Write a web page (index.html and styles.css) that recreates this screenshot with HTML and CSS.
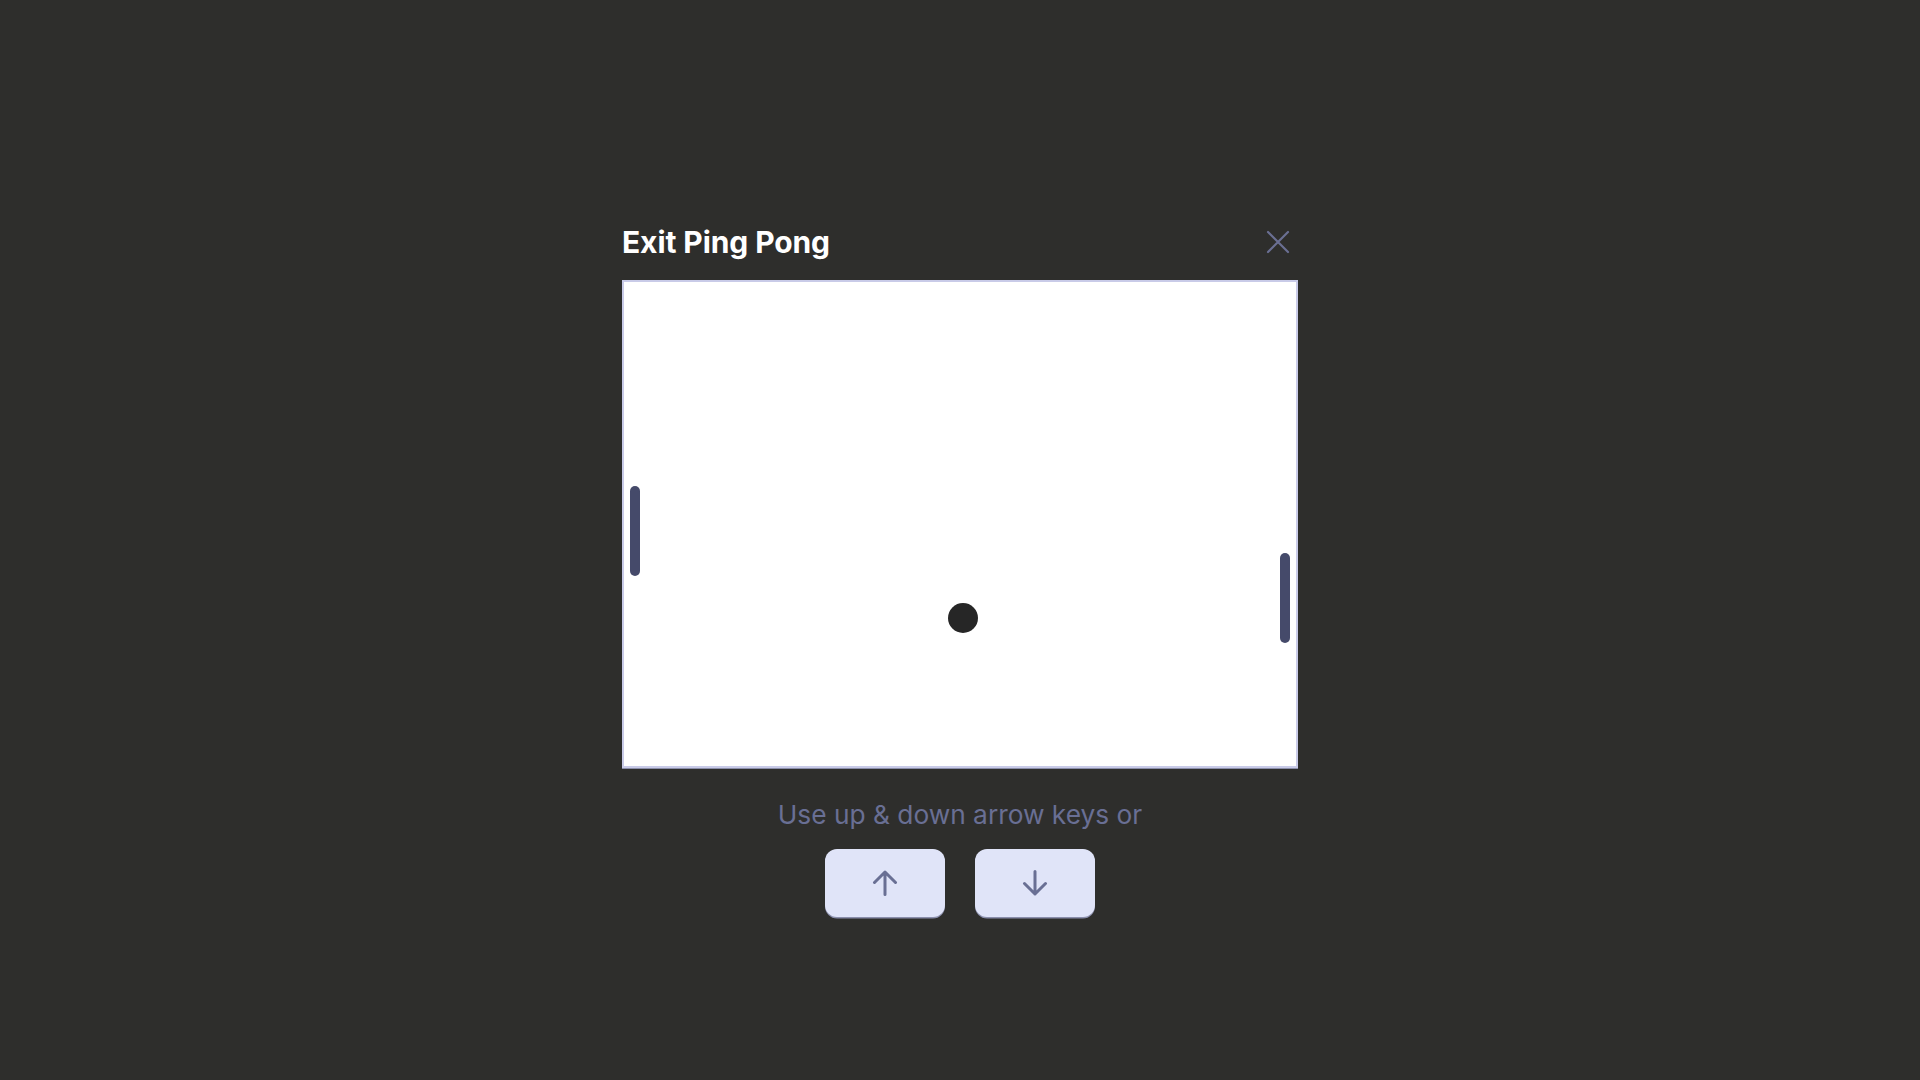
FILE: index.html
```html
<!DOCTYPE html>
<html lang="en">
<head>
<meta charset="utf-8">
<title>Exit Ping Pong</title>
<link rel="stylesheet" href="styles.css">
</head>
<body>
<div class="page">
  <div class="dialog">
    <div class="header">
      <h1 class="title">Exit Ping Pong</h1>
      <button class="close" aria-label="Close">
        <svg width="24" height="24" viewBox="0 0 24 24" fill="none" stroke="currentColor" stroke-width="2.2" stroke-linecap="round">
          <path d="M2 2L22 22M22 2L2 22"/>
        </svg>
      </button>
    </div>
    <div class="board">
      <div class="paddle paddle-left"></div>
      <div class="paddle paddle-right"></div>
      <div class="ball"></div>
    </div>
    <p class="hint">Use up &amp; down arrow keys or</p>
    <div class="controls">
      <button class="key" aria-label="Up">
        <svg width="26" height="26" viewBox="0 0 26 26" fill="none" stroke="currentColor" stroke-width="3" stroke-linecap="round" stroke-linejoin="round">
          <path d="M13 24.5V2M2.5 12.5L13 2L23.5 12.5"/>
        </svg>
      </button>
      <button class="key" aria-label="Down">
        <svg width="26" height="26" viewBox="0 0 26 26" fill="none" stroke="currentColor" stroke-width="3" stroke-linecap="round" stroke-linejoin="round">
          <path d="M13 1.5V24M2.5 13.5L13 24L23.5 13.5"/>
        </svg>
      </button>
    </div>
  </div>
</div>
</body>
</html>
```

FILE: styles.css
```css
html, body {
  margin: 0;
  padding: 0;
  background: #2e2e2c;
  height: 100%;
}

body {
  font-family: Inter, "Noto Sans", sans-serif;
}

.page {
  display: flex;
  justify-content: center;
  padding-top: 222px;
}

.dialog {
  width: 676px;
  display: flex;
  flex-direction: column;
  align-items: center;
}

.header {
  width: 100%;
  height: 40px;
  display: flex;
  align-items: center;
  justify-content: space-between;
  margin-bottom: 18px;
}

.title {
  margin: 0;
  font-size: 30px;
  line-height: 40px;
  font-weight: 700;
  color: #ffffff;
  letter-spacing: -0.1px;
}

.close {
  width: 32px;
  height: 32px;
  padding: 0;
  margin: 0 4px 0 0;
  border: none;
  background: transparent;
  color: #6a6f93;
  display: flex;
  align-items: center;
  justify-content: center;
  cursor: pointer;
}

.board {
  position: relative;
  width: 672px;
  height: 484px;
  background: #ffffff;
  border: 2px solid #c9cbe8;
  box-shadow: 0 1px 0 #8b8ea9;
}

.paddle {
  position: absolute;
  width: 10px;
  height: 90px;
  border-radius: 5px;
  background: #454a6a;
}

.paddle-left {
  left: 6px;
  top: 204px;
}

.paddle-right {
  right: 6px;
  top: 271px;
}

.ball {
  position: absolute;
  left: 324px;
  top: 321px;
  width: 30px;
  height: 30px;
  border-radius: 50%;
  background: #262626;
}

.hint {
  margin: 29px 0 0;
  font-size: 26.3px;
  line-height: 36px;
  color: #696f94;
  font-weight: 400;
}

.controls {
  display: flex;
  gap: 30px;
  margin-top: 16px;
}

.key {
  width: 120px;
  height: 68px;
  border: none;
  border-radius: 12px;
  background: #e0e4f8;
  box-shadow: 0 1.5px 0 #8a8eab;
  color: #696f94;
  display: flex;
  align-items: center;
  justify-content: center;
  padding: 0;
  cursor: pointer;
}
```
